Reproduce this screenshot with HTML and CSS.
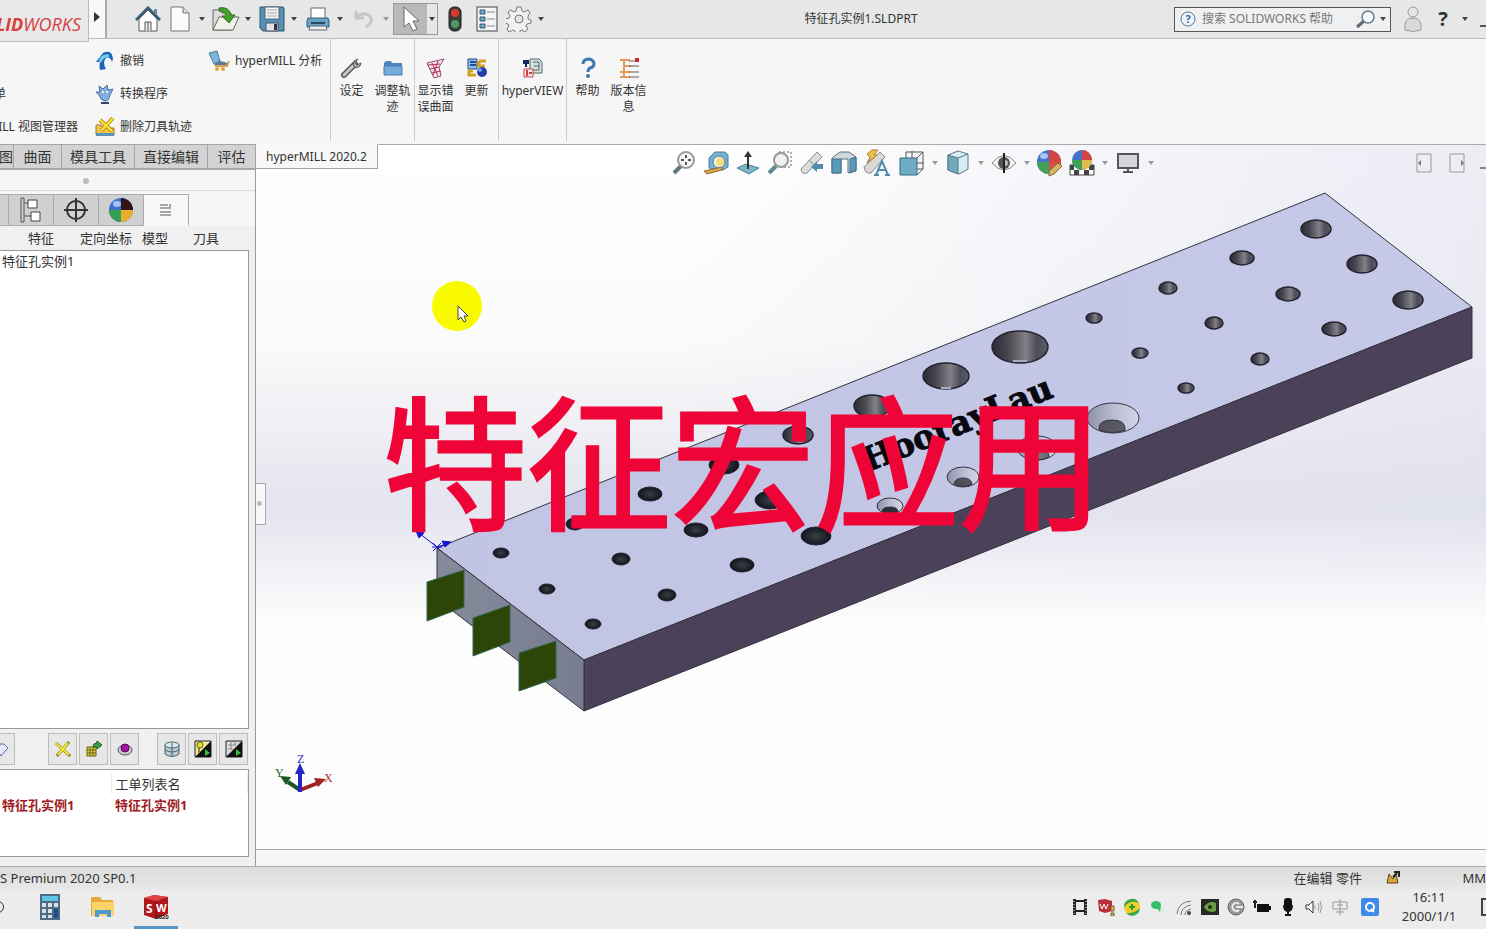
FILE: index.html
```html
<!DOCTYPE html>
<html lang="zh-CN">
<head>
    <meta charset="UTF-8">
    <meta name="viewport" content="width=device-width, initial-scale=1.0">
    <title>特征孔实例1.SLDPRT</title>
    <link rel="stylesheet" href="styles.css">
</head>
<body>

<header class="titlebar">
  <div class="logo"><b>LID</b>WORKS</div>
  <button class="logo-arrow" aria-label="展开菜单"><svg width="8" height="12"><path d="M1 1l6 5-6 5z" fill="#333"/></svg></button>
  <div class="quick">
    <button class="tool" aria-label="主页"><svg width="26" height="26" viewBox="0 0 26 26"><path d="M4 13v12h18V13l-9-9z" fill="#fff" stroke="#555"/><path d="M1 14L13 2l12 12" fill="none" stroke="#3b6076" stroke-width="3"/><path d="M10 25v-9h6v9M13 16v9" fill="#eee" stroke="#555"/><path d="M19 3h3v6l-3-3z" fill="#6c8796"/></svg></button>
    <div class="quick-files">
      <button class="tool" aria-label="新建"><svg width="22" height="26" viewBox="0 0 22 26"><path d="M2 1h12l6 6v18H2z" fill="#fafafa" stroke="#777"/><path d="M14 1v6h6" fill="#ddd" stroke="#777"/></svg></button>
      <button class="caret" aria-label="新建选项"></button>
      <button class="tool" aria-label="打开"><svg width="28" height="26" viewBox="0 0 28 26"><path d="M1 24V4h7l2 3h9v17z" fill="#ddd" stroke="#666"/><path d="M1 24l6-13h20l-6 13z" fill="#f1f1ea" stroke="#666"/><path d="M7 2q10-2 12 7h4l-6 8-7-7h4q-1-5-7-5z" fill="#46a02c" stroke="#2c7420"/></svg></button>
      <button class="caret" aria-label="打开选项"></button>
      <button class="tool" aria-label="保存"><svg width="26" height="26" viewBox="0 0 26 26"><path d="M1 1h23l1 1v23H4l-3-3z" fill="#5590b4" stroke="#2e556e"/><path d="M6 1h14v12H6z" fill="#f4f4f4" stroke="#567"/><path d="M8 4h10M8 7h10M8 10h10" stroke="#aaa"/><path d="M7 17h12v8H7z" fill="#e2e2e2" stroke="#456"/><path d="M15 18h3v6h-3z" fill="#334"/></svg></button>
      <button class="caret" aria-label="保存选项"></button>
      <button class="tool" aria-label="打印"><svg width="24" height="24" viewBox="0 0 24 24"><path d="M5 11V1h14v10" fill="#fff" stroke="#667"/><path d="M2 11h20l1 3v6H1v-6z" fill="#69a2c6" stroke="#2f5f7d"/><path d="M5 15h14v2H5z" fill="#254b63"/><path d="M4 19h16l1 4H3z" fill="#eee" stroke="#667"/></svg></button>
      <button class="caret" aria-label="打印选项"></button>
      <button class="tool" aria-label="撤销"><svg width="22" height="20" viewBox="0 0 22 20"><path d="M3 2v7h8M3 8q9-6 14-1 4 6-4 11" fill="none" stroke="#c4c6c8" stroke-width="3"/></svg></button>
      <button class="caret faint" aria-label="撤销选项"></button>
    </div>
    <div class="select-tool">
      <button class="tool" aria-label="选择"><svg width="18" height="26" viewBox="0 0 18 26"><path d="M2 1v20l5-4 4 8 4-2-4-8h6z" fill="#fff" stroke="#666"/></svg></button>
      <button class="caret" aria-label="选择选项"></button>
    </div>
    <button class="tool" aria-label="重建模型"><svg width="14" height="26" viewBox="0 0 14 26"><rect x="1" y="1" width="12" height="24" rx="5" fill="#3c3c38" stroke="#222"/><circle cx="7" cy="7" r="4" fill="#d8382e"/><circle cx="7" cy="18" r="4" fill="#4f9a63"/></svg></button>
    <button class="tool" aria-label="文件属性"><svg width="22" height="26" viewBox="0 0 22 26"><rect x="1" y="1" width="20" height="24" fill="#f2f4f5" stroke="#444"/><path d="M4 4h5v4H4zM4 11h5v4H4zM4 18h5v4H4z" fill="#6fa9c4" stroke="#35586c"/><path d="M11 6h8M11 13h8M11 20h8" stroke="#888"/></svg></button>
    <button class="tool" aria-label="选项"><svg width="26" height="26" viewBox="0 0 26 26"><path d="M11 1h4l1 4 2 1 4-2 2 3-2 3v3l3 1v3l-4 1-1 2 2 3-3 3-3-2-2 1-1 3h-3l-1-3-2-1-4 2-2-3 2-3-1-2-3-1v-4l4-1 1-2-2-4 3-2 3 2 2-1z" fill="#f1f1f1" stroke="#777"/><circle cx="13" cy="13" r="4" fill="#e4e4e4" stroke="#777"/></svg></button>
    <button class="caret" aria-label="选项菜单"></button>
  </div>
  <h1 class="doc-title">特征孔实例1.SLDPRT</h1>
  <div class="search">
    <svg width="18" height="18" viewBox="0 0 18 18"><circle cx="9" cy="9" r="7" fill="#eef4f9" stroke="#557286"/><text x="9" y="13" font-size="11" font-weight="bold" text-anchor="middle" fill="#2a6fa8">?</text></svg>
    <input type="text" placeholder="搜索 SOLIDWORKS 帮助" aria-label="搜索 SOLIDWORKS 帮助">
    <button class="search-go" aria-label="搜索"><svg width="20" height="20" viewBox="0 0 20 20"><path d="M1 18l7-6" stroke="#667" stroke-width="3"/><circle cx="12" cy="8" r="6" fill="#f4faff" stroke="#66798a" stroke-width="1.500"/></svg></button>
    <button class="caret" aria-label="搜索选项"></button>
  </div>
  <button class="tool" aria-label="登录"><svg width="20" height="28" viewBox="0 0 20 28"><circle cx="10" cy="7" r="5" fill="#e4e4e4" stroke="#999"/><path d="M2 25v-6q1-6 8-6t8 6v6q-8 3-16 0z" fill="#d9d9d9" stroke="#999"/></svg></button>
  <button class="tool help-mark">?</button>
  <button class="caret" aria-label="帮助菜单"></button>
  <button class="minimize" aria-label="最小化"></button>
</header>

<section class="ribbon">
  <div class="ribbon-list first">
    <button>&nbsp;</button>
    <button>单</button>
    <button>ILL 视图管理器</button>
  </div>
  <div class="ribbon-list second">
    <button><svg width="20" height="22" viewBox="0 0 20 22"><path d="M5 20q-1-4 0-8H1L8 3q9-4 10 6l-1 3q-2-6-6-4-4 4 0 11z" fill="#1f62b9"/><path d="M5 12q2-7 9-6" fill="none" stroke="#6fd0ee" stroke-width="3"/></svg>撤销</button>
    <button><svg width="20" height="22" viewBox="0 0 20 22"><path d="M4 3l4 3 4-4 1 5 5-1-3 6q-1 6-5 6t-6-6L1 9h4z" fill="#84aede" stroke="#456f9f"/><path d="M6 20h8" stroke="#2f4668" stroke-width="2"/><circle cx="8" cy="9" r="1" fill="#fff"/><circle cx="12" cy="9" r="1" fill="#fff"/></svg>转换程序</button>
    <button><svg width="20" height="20" viewBox="0 0 20 20"><path d="M1 8h5l2 3h11v7H1z" fill="#f3c34c" stroke="#a27a24"/><path d="M1 16h18v3H1z" fill="#5b91bd"/><path d="M5 3l12 11M18 1L6 14" stroke="#b3921c" stroke-width="4"/><path d="M5 3l12 11M18 1L6 14" stroke="#ffe337" stroke-width="2"/></svg>删除刀具轨迹</button>
  </div>
  <div class="ribbon-list third">
    <button><svg width="22" height="22" viewBox="0 0 22 22"><path d="M1 3l8-2 3 10-6 3z" fill="#7db6db" stroke="#4c7898"/><path d="M6 14l6-3 8 2-2 3-10 1z" fill="#567b9c"/><path d="M7 16h12l2-5" fill="none" stroke="#dba145" stroke-width="2"/><circle cx="9" cy="19" r="2" fill="#e5a33c"/><circle cx="15" cy="19" r="2" fill="#e5a33c"/></svg>hyperMILL 分析</button>
  </div>
  <div class="ribbon-group">
    <button><svg width="22" height="22" viewBox="0 0 22 22"><path d="M3 18L14 7" stroke="#555" stroke-width="6" stroke-linecap="round"/><path d="M3 18L14 7" stroke="#c9c9c9" stroke-width="3" stroke-linecap="round"/><path d="M17 2l-4 2-1 4 3 3 4-2 1-3-4 2-2-2z" fill="#aaa" stroke="#555"/></svg>设定</button>
    <button><svg width="22" height="22" viewBox="0 0 22 22"><path d="M2 6l2-2h5l1 2h10v12H2z" fill="#4a86bf"/><path d="M2 9h18v9H2z" fill="#76aadb" stroke="#477cab"/></svg>调整轨迹</button>
  </div>
  <div class="ribbon-group">
    <button><svg width="22" height="22" viewBox="0 0 22 22"><path d="M2 6l17-4-5 8 2 9-7 2z" fill="#f3e6ee" stroke="#8b4b7b"/><path d="M3 8l12-1M5 12l9-2M7 16l9-2M7 6l6 13M13 4l-5 14" stroke="#bd2e4d"/></svg>显示错误曲面</button>
    <button><svg width="22" height="22" viewBox="0 0 22 22"><path d="M2 2h9v10H2z" fill="#8ec4e8" stroke="#1e4196"/><path d="M4 5h6M4 8h6" stroke="#244a9e" stroke-width="2"/><path d="M13 4h7M13 4v5h6M10 18H3v-4h4" stroke="#d1a41c" stroke-width="3" fill="none"/><circle cx="16" cy="15" r="5" fill="#233cae"/><circle cx="14" cy="13" r="2" fill="#7f9ae7"/></svg>更新</button>
  </div>
  <div class="ribbon-group wide">
    <button><svg width="22" height="22" viewBox="0 0 22 22"><path d="M8 2h9l3 3v11H8z" fill="#d7e0df" stroke="#4d6965"/><path d="M11 5h6v8h-6M12 9h5" fill="none" stroke="#4d6965"/><path d="M1 3h6v4H1z" fill="#17285c"/><path d="M4 6v4" stroke="#17285c" stroke-width="2"/><path d="M2 12h9v8H2z" fill="#fce9e9" stroke="#cf4242"/><path d="M5 13v6M7 16h3" stroke="#cf4242" stroke-width="2"/></svg>hyperVIEW</button>
  </div>
  <div class="ribbon-group last">
    <button><svg width="22" height="22" viewBox="0 0 22 22"><path d="M6 7q0-5 6-5 5 1 5 5 0 3-4 4-2 1-2 4" fill="none" stroke="#3f78b5" stroke-width="3"/><circle cx="11" cy="19" r="2" fill="#3f78b5"/></svg>帮助</button>
    <button><svg width="22" height="22" viewBox="0 0 22 22"><path d="M2 3h10M6 9h7M2 15h10M2 20h10M6 3v17" stroke="#e79b58" stroke-width="2"/><path d="M11 4h6M11 9h10M11 15h10M11 20h10" stroke="#665a58"/><path d="M17 1h4v4h-4z" fill="#cf2525"/></svg>版本信息</button>
  </div>
</section>

<main class="workspace">
  <nav class="ribbon-tabs">
    <button class="cut">图</button>
    <button>曲面</button>
    <button>模具工具</button>
    <button>直接编辑</button>
    <button>评估</button>
    <button class="active">hyperMILL 2020.2</button>
  </nav>

  <aside class="panel">
    <div class="panel-grip"><i></i></div>
    <div class="panel-tabs">
      <button class="stub" aria-label="特征树"></button>
      <button aria-label="配置"><svg width="24" height="26" viewBox="0 0 24 26"><path d="M2 1v24M5 1v24M2 1h3M2 25h3M5 6h5M5 19h7" fill="none" stroke="#555"/><path d="M9 3h9v8H9zM12 15h9v9h-9z" fill="#fff" stroke="#444"/></svg></button>
      <button aria-label="坐标"><svg width="26" height="26" viewBox="0 0 26 26"><circle cx="13" cy="13" r="9" fill="none" stroke="#333" stroke-width="2"/><path d="M13 1v24M1 13h24" stroke="#333" stroke-width="2"/></svg></button>
      <button aria-label="外观"><svg width="26" height="26" viewBox="0 0 26 26"><circle cx="13" cy="13" r="12" fill="#3a6fd4"/><path d="M13 13V1a12 12 0 0 1 12 12z" fill="#321318"/><path d="M13 13h12a12 12 0 0 1-12 12z" fill="#e6b02e"/><path d="M13 13v12A12 12 0 0 1 1 13z" fill="#35a052"/><ellipse cx="9" cy="7" rx="4" ry="3" fill="#a4c3f4"/></svg></button>
      <button class="active" aria-label="hyperMILL"><svg width="14" height="14" viewBox="0 0 14 14"><path d="M1 2h8M1 5h11M1 9h11M1 12h11M11 1v3" stroke="#555"/></svg></button>
    </div>
    <div class="panel-columns">
      <span>特征</span><span>定向坐标</span><span>模型</span><span>刀具</span>
    </div>
    <div class="tree">特征孔实例1</div>
    <div class="job-tools">
      <button class="stub" aria-label="工单"><svg width="16" height="20" viewBox="0 0 16 20"><path d="M0 5h4l4 4-7 8-3-5z" fill="#e5e7fb" stroke="#666b9b"/></svg></button>
      <button aria-label="删除"><svg width="18" height="18" viewBox="0 0 18 18"><path d="M2 3l14 13M15 2L3 16" stroke="#77731c" stroke-width="3"/><path d="M2 3l13 12M14 3L4 15" stroke="#f1e728" stroke-width="2"/></svg></button>
      <button aria-label="添加"><svg width="18" height="18" viewBox="0 0 18 18"><path d="M2 7h9v9H2z" fill="#e4d33d" stroke="#6a611a"/><path d="M5 7v9M8 7v9M2 10h9M2 13h9" stroke="#6a611a"/><path d="M8 7q0-4 4-4V1l5 4-5 4V7z" fill="#3b9d42" stroke="#1f602a"/></svg></button>
      <button aria-label="特征"><svg width="18" height="18" viewBox="0 0 18 18"><ellipse cx="9" cy="10" rx="7" ry="5" fill="#ccc" stroke="#555"/><ellipse cx="9" cy="8" rx="4" ry="4" fill="#a313a8" stroke="#4f0f55"/></svg></button>
      <button class="apart" aria-label="毛坯"><svg width="18" height="18" viewBox="0 0 18 18"><path d="M2 5v9q7 5 14 0V5" fill="#b9cbd2" stroke="#4b6069"/><ellipse cx="9" cy="5" rx="7" ry="3" fill="#dce9ed" stroke="#4b6069"/><path d="M9 3v13M2 10q7 4 14 0" fill="none" stroke="#4b6069"/></svg></button>
      <button aria-label="计算"><svg width="18" height="18" viewBox="0 0 18 18"><path d="M1 1h16v16H1z" fill="#f0eda2" stroke="#222"/><path d="M17 1v16H1z" fill="#111"/><circle cx="6" cy="5" r="3" fill="#e6df31" stroke="#665f15"/><path d="M5 8v5" stroke="#948a1a" stroke-width="2"/><path d="M11 9l5 4-5 3z" fill="#2fc23c"/></svg></button>
      <button aria-label="模拟"><svg width="18" height="18" viewBox="0 0 18 18"><path d="M1 1h16v16H1z" fill="#ddd" stroke="#222"/><path d="M17 1v16H1z" fill="#111"/><path d="M3 5h8M3 9h5M6 2v8M10 2v4" stroke="#888"/><path d="M11 9l5 4-5 3z" fill="#2fc23c"/></svg></button>
    </div>
    <div class="jobs">
      <table>
        <thead><tr><th>&nbsp;</th><th>工单列表名</th></tr></thead>
        <tbody><tr><td>特征孔实例1</td><td>特征孔实例1</td></tr></tbody>
      </table>
    </div>
  </aside>

  <section class="viewport">
    <svg class="scene" viewBox="256 144 1230 706" preserveAspectRatio="xMinYMin meet">
      <defs>
        <linearGradient id="top" x1="0" y1="0" x2="1" y2="0"><stop offset="0" stop-color="#c1c5e3"/><stop offset="1" stop-color="#c5c8e6"/></linearGradient>
        <linearGradient id="end" x1="0" y1="0" x2="1" y2="0"><stop offset="0" stop-color="#858b9b"/><stop offset="1" stop-color="#777d8e"/></linearGradient>
        <linearGradient id="hole" x1="0" y1="0" x2="1" y2="0"><stop offset="0" stop-color="#2a2a35"/><stop offset=".3" stop-color="#4a4852"/><stop offset=".6" stop-color="#838087"/><stop offset=".8" stop-color="#4d4d59"/><stop offset="1" stop-color="#5a5a68"/></linearGradient>
        <linearGradient id="sink" x1="0" y1="0" x2="1" y2="0"><stop offset="0" stop-color="#8d8fa7"/><stop offset=".5" stop-color="#b9bbd0"/><stop offset="1" stop-color="#d5d7e8"/></linearGradient>
        <radialGradient id="dark"><stop offset="0" stop-color="#3b4047"/><stop offset="1" stop-color="#11141c"/></radialGradient>
      </defs>

      <!-- plate -->
      <g stroke="#33333f" stroke-linejoin="round">
        <path d="M437 548L1325 193 1472 307 584 660z" fill="url(#top)"/>
        <path d="M584 660L1472 307V358L584 711z" fill="#4b4158"/>
        <path d="M437 548L584 660V711L437 599z" fill="url(#end)"/>
      </g>

      <!-- blind holes -->
      <g fill="url(#dark)" stroke="#20242d">
        <ellipse cx="501" cy="553" rx="8" ry="5"/><ellipse cx="547" cy="589" rx="8" ry="5"/><ellipse cx="593" cy="624" rx="8" ry="5"/>
        <ellipse cx="575" cy="524" rx="9" ry="6"/><ellipse cx="621" cy="559" rx="9" ry="6"/><ellipse cx="667" cy="595" rx="9" ry="6"/>
        <ellipse cx="650" cy="494" rx="12" ry="7"/><ellipse cx="696" cy="530" rx="12" ry="7"/><ellipse cx="742" cy="565" rx="12" ry="7"/>
        <ellipse cx="724" cy="465" rx="15" ry="9"/><ellipse cx="770" cy="500" rx="15" ry="9"/><ellipse cx="816" cy="536" rx="15" ry="9"/>
      </g>

      <!-- through holes -->
      <g fill="url(#hole)" stroke="#23232f" stroke-width="1.500">
        <ellipse cx="798" cy="435" rx="15" ry="9"/><ellipse cx="872" cy="406" rx="18" ry="11"/><ellipse cx="946" cy="376" rx="23" ry="13"/><ellipse cx="1020" cy="347" rx="28" ry="16"/>
        <ellipse cx="1094" cy="318" rx="8" ry="5"/><ellipse cx="1140" cy="353" rx="8" ry="5"/><ellipse cx="1186" cy="388" rx="8" ry="5"/>
        <ellipse cx="1168" cy="288" rx="9" ry="6"/><ellipse cx="1214" cy="323" rx="9" ry="6"/><ellipse cx="1260" cy="359" rx="9" ry="6"/>
        <ellipse cx="1242" cy="258" rx="12" ry="7"/><ellipse cx="1288" cy="294" rx="12" ry="7"/><ellipse cx="1334" cy="329" rx="12" ry="7"/>
        <ellipse cx="1316" cy="229" rx="15" ry="9"/><ellipse cx="1362" cy="264" rx="15" ry="9"/><ellipse cx="1408" cy="300" rx="15" ry="9"/>
      </g>
      <path d="M1013 361h14M941 388h10" stroke="#a9abc2" stroke-width="2"/>

      <!-- countersinks -->
      <g stroke="#33333f">
        <g fill="url(#sink)"><ellipse cx="890" cy="506" rx="13" ry="8"/><ellipse cx="963" cy="477" rx="16" ry="10"/><ellipse cx="1037" cy="448" rx="20" ry="12"/><ellipse cx="1113" cy="418" rx="26" ry="15"/></g>
        <g fill="url(#hole)"><path d="M882 512q0-5 8-5t8 5q-8 4-16 0zM954 484q1-6 9-6t9 6q-9 5-18 0zM1026 457q1-8 12-8t11 8q-12 6-23 0zM1099 430q-1-10 13-10t13 10q-12 5-26 0z"/></g>
      </g>

      <text class="engraving" transform="translate(868 472) rotate(-22)">HoorayLau</text>

      <!-- reference planes -->
      <g fill="#2d4608" stroke="#2c6a52">
        <path d="M427 582L464 570V607L427 621z"/><path d="M473 618L510 605V642L473 656z"/><path d="M519 653L556 641V678L519 691z"/>
      </g>

      <!-- part origin -->
      <g stroke="#1515d2" fill="#1515d2"><path d="M437 547L420 534M437 547L446 544M433 543l8 8M441 543l-8 8M432 547h10"/><path d="M416 531l8 2-5 5zM451 542l-9-1 3 6z"/></g>

      <!-- view triad -->
      <g stroke-width="4">
        <path d="M300 790L288 782" stroke="#1e5426"/><path d="M280 776l11 1-5 8z" fill="#1e5426"/>
        <path d="M300 790L318 783" stroke="#9c2323"/><path d="M326 779l-12-1 4 9z" fill="#9c2323"/>
        <path d="M300 792V773" stroke="#2424c8"/><path d="M300 763l-5 11h10z" fill="#2424c8"/>
      </g>
      <g class="axis"><text x="297" y="763" fill="#3434a4">Z</text><text x="275" y="777" fill="#2e6638">Y</text><text x="324" y="782" fill="#a43434">X</text></g>

      <!-- pointer -->
      <circle cx="457" cy="306" r="25" fill="#f9f900"/>
      <path d="M458 306v14l3-3 3 5 2-1-2-5h4z" fill="#fff" stroke="#444"/>
    </svg>

    <div class="view-bar">
      <div class="view-tools">
        <button class="tool" aria-label="整屏显示全图"><svg width="24" height="26" viewBox="0 0 24 26"><path d="M2 23l7-7" stroke="#5d7a7e" stroke-width="4"/><circle cx="14" cy="10" r="8" fill="#f6f6f6" stroke="#999" stroke-width="2"/><path d="M14 5v3M14 12v3M9 10h3M16 10h3" stroke="#555" stroke-width="2"/></svg></button>
        <button class="tool" aria-label="测量"><svg width="26" height="26" viewBox="0 0 26 26"><path d="M6 18V8l6-6h10l3 3v12l-5 3z" fill="#75b3cd" stroke="#467c92"/><circle cx="16" cy="12" r="6" fill="#eee" stroke="#467c92"/><circle cx="17" cy="12" r="4" fill="#f4dd78"/><path d="M1 21l18-4v3L4 24z" fill="#d9a354" stroke="#997038"/></svg></button>
        <button class="tool" aria-label="正视于"><svg width="24" height="26" viewBox="0 0 24 26"><path d="M1 18l9-4 13 4-10 6z" fill="#79b6c9" stroke="#4b8496"/><path d="M12 19V4" stroke="#333" stroke-width="2"/><path d="M8 7l4-6 4 6z" fill="#333"/></svg></button>
        <button class="tool" aria-label="局部放大"><svg width="26" height="26" viewBox="0 0 26 26"><path d="M12 2h12v15H12z" fill="none" stroke="#666" stroke-dasharray="2 2"/><path d="M2 23l7-7" stroke="#5d8a8e" stroke-width="4"/><circle cx="14" cy="10" r="7" fill="#f1f1f1" stroke="#999" stroke-width="2"/></svg></button>
        <button class="tool" aria-label="上一视图"><svg width="26" height="26" viewBox="0 0 26 26"><path d="M2 19L18 2l5 5L8 23q-5 2-6-4z" fill="#dcdcdc" stroke="#888"/><path d="M10 10l6 6" stroke="#888"/><path d="M24 14h-6v-3l-6 6 6 5v-3h6z" fill="#518eac"/></svg></button>
        <button class="tool" aria-label="剖面视图"><svg width="26" height="26" viewBox="0 0 26 26"><path d="M1 8l8-6h9l7 5v14l-8 2V9h-7v14H1z" fill="#cfd9dd" stroke="#5f7079"/><path d="M1 9h9v14H1zM19 9l6-2v13l-6 3z" fill="#5a9aba" stroke="#3e728b"/></svg></button>
        <button class="tool" aria-label="动态注解"><svg width="28" height="28" viewBox="0 0 28 28"><path d="M2 18L18 3l5 5L9 24q-6 1-7-6z" fill="#d8d8d8" stroke="#888"/><path d="M5 5l5-4h6l-4 5h3L5 14l3-6z" fill="#efc24c" stroke="#a67c24"/><path d="M14 26l6-14 6 14M16 21h8M12 26h5M23 26h5" fill="none" stroke="#508ba8" stroke-width="2"/></svg></button>
        <button class="tool push" aria-label="视图定向"><svg width="26" height="26" viewBox="0 0 26 26"><path d="M7 2h17v17H7z" fill="#f4f6f6" stroke="#555"/><path d="M1 25l6-6M18 8l6-6M18 25l6-6M13 1v9M16 13h9" stroke="#555"/><path d="M1 8h17v17H1z" fill="#6eabc4" stroke="#38687c"/></svg></button>
        <button class="caret faint" aria-label="视图定向选项"></button>
        <button class="tool" aria-label="显示样式"><svg width="24" height="26" viewBox="0 0 24 26"><path d="M2 5l10-4 10 3v15l-9 5-11-4z" fill="#d7ecf2" stroke="#547987"/><path d="M2 5l10 3v16L2 20z" fill="#71aabd" stroke="#547987"/><path d="M12 8l10-4" stroke="#547987"/></svg></button>
        <button class="caret faint" aria-label="显示样式选项"></button>
        <button class="tool" aria-label="隐藏/显示"><svg width="26" height="20" viewBox="0 0 26 20"><path d="M1 10q12-15 24 0-12 14-24 0z" fill="#f5f5f5" stroke="#888"/><circle cx="13" cy="10" r="6" fill="#555"/><path d="M13 0v20" stroke="#222" stroke-width="2"/><path d="M14 7a3 3 0 0 1 0 6" fill="#bbb"/></svg></button>
        <button class="caret faint" aria-label="隐藏选项"></button>
        <button class="tool" aria-label="编辑外观"><svg width="28" height="28" viewBox="0 0 28 28"><circle cx="13" cy="13" r="12" fill="#4073c9"/><path d="M13 13V1a12 12 0 0 1 12 12z" fill="#d74343"/><path d="M13 13v12A12 12 0 0 1 1 13z" fill="#42a05a"/><path d="M13 13h12a12 12 0 0 1-12 12z" fill="#d64f46"/><ellipse cx="8" cy="7" rx="4" ry="3" fill="#a8c6ef"/><path d="M13 22l9-8 4 3-8 8-5 2z" fill="#d7b666" stroke="#7a6534"/></svg></button>
        <button class="tool" aria-label="应用布景"><svg width="28" height="28" viewBox="0 0 28 28"><path d="M2 16h24v10H2z" fill="#fff" stroke="#444"/><path d="M2 16h4v5H2zM6 21h5v5H6zM11 17h5v4h-5zM16 21h5v5h-5zM21 16h5v5h-5z" fill="#444"/><circle cx="14" cy="11" r="10" fill="#4073c9"/><path d="M14 11V1a10 10 0 0 1 10 10z" fill="#d74343"/><path d="M14 11v10A10 10 0 0 1 4 11z" fill="#42a05a"/><path d="M14 11h10a10 10 0 0 1-10 10z" fill="#e2bd4c"/></svg></button>
        <button class="caret faint" aria-label="布景选项"></button>
        <button class="tool" aria-label="视图设定"><svg width="24" height="22" viewBox="0 0 24 22"><path d="M2 2h20v14H2z" fill="#d5d7dc" stroke="#555" stroke-width="2"/><path d="M12 16v4M7 20h10" stroke="#555" stroke-width="2"/></svg></button>
        <button class="caret faint" aria-label="视图设定选项"></button>
      </div>
      <div class="window-tools">
        <button class="tool" aria-label="左侧面板"><svg width="16" height="20" viewBox="0 0 16 20"><path d="M1 1h14v18H1z" fill="none" stroke="#999"/><path d="M5 7v6l-3-3z" fill="#777"/></svg></button>
        <button class="tool" aria-label="右侧面板"><svg width="16" height="20" viewBox="0 0 16 20"><path d="M1 1h14v18H1z" fill="none" stroke="#999"/><path d="M12 7v6l3-3z" fill="#777"/></svg></button>
        <button class="minimize" aria-label="最小化文档"></button>
      </div>
    </div>
    <button class="panel-handle" aria-label="收起面板"></button>
  </section>
  <p class="caption">特征宏应用</p>
</main>

<footer class="statusbar">
  <span class="product">S Premium 2020 SP0.1</span>
  <span>在编辑 零件</span>
  <svg class="rebuild" width="14" height="14" viewBox="0 0 14 14"><path d="M1 12l2-9 4 5 3-5 2 9z" fill="#d9a438" stroke="#5c4618"/><path d="M7 6l4-4M8 1h5v5" fill="none" stroke="#222" stroke-width="2"/></svg>
  <span class="units">MM</span>
</footer>

<div class="taskbar">
  <button class="cortana" aria-label="搜索"></button>
  <button class="app" aria-label="计算器"><svg width="20" height="26" viewBox="0 0 20 26"><path d="M0 0h20v26H0z" fill="#4d6b82"/><path d="M2 2h16v5H2z" fill="#5ec3e7"/><path d="M2 9h4v4H2zM8 9h4v4H8zM14 9h4v4h-4zM2 15h4v4H2zM8 15h4v4H8zM2 21h4v3H2zM8 21h4v3H8z" fill="#d8e1e8"/><path d="M14 15h4v9h-4z" fill="#1b4d87"/></svg></button>
  <button class="app" aria-label="文件资源管理器"><svg width="24" height="22" viewBox="0 0 24 22"><path d="M0 1h9l2 3h11v16H0z" fill="#e9a83c"/><path d="M1 6h22v14H1z" fill="#f9d368"/><path d="M4 21v-7h16v7h-4v-3H8v3z" fill="#4b9ad0"/></svg></button>
  <button class="app running" aria-label="SOLIDWORKS"><svg width="26" height="26" viewBox="0 0 26 26"><path d="M1 4l10-3 14 2v17l-12 5-12-4z" fill="#b2171c"/><path d="M1 4l12 3 12-4-14-2z" fill="#e44347"/><path d="M13 7v18" stroke="#7c0e12"/><g fill="#fff" font-weight="bold"><text x="3" y="19" font-size="12">S</text><text x="13" y="18" font-size="11">W</text></g><text x="12" y="25" font-size="6" font-weight="bold" fill="#222">2020</text></svg></button>
  <div class="tray">
    <svg viewBox="0 0 18 18"><path d="M2 1h3v16H2zM13 1h3v16h-3z" fill="#222"/><path d="M5 3h8M5 13h8" stroke="#222" stroke-width="2"/><path d="M3 3v13M15 3v13" stroke="#fff" stroke-dasharray="1 2"/></svg>
    <svg viewBox="0 0 18 18"><path d="M1 2l7-1 7 2v10l-7 2-6-2z" fill="#b9303a"/><path d="M3 6l2 5 2-5 2 5 2-5" fill="none" stroke="#fff"/><path d="M14 8h3v5h-3zM14 15h3v3h-3z" fill="#e2b84a" stroke="#775f22"/></svg>
    <svg viewBox="0 0 18 18"><circle cx="9" cy="9" r="8" fill="#f0cf2b"/><path d="M1 9a8 8 0 0 1 15-4q-8-4-15 4z" fill="#36a846"/><path d="M17 10a8 8 0 0 1-14 5q8 1 14-5z" fill="#36a846"/><path d="M9 6v6M6 9h6" stroke="#2c9a3c" stroke-width="2"/></svg>
    <svg viewBox="0 0 18 18"><ellipse cx="7" cy="7" rx="5" ry="4" fill="#35bd69"/><path d="M7 9l4 5 1-6z" fill="#35bd69"/><circle cx="14" cy="12" r="2" fill="#d5eedf"/></svg>
    <svg viewBox="0 0 18 18"><path d="M2 16Q3 4 16 3M6 17q0-8 10-10M10 17q0-5 6-6" fill="none" stroke="#777"/><circle cx="14" cy="15" r="2" fill="#444"/></svg>
    <svg viewBox="0 0 18 18"><path d="M0 1h18v16H0z" fill="#252a22"/><path d="M3 9q5-7 12-4v8q-8 3-12-4z" fill="#6c9d3d"/><circle cx="9" cy="9" r="2" fill="#252a22"/></svg>
    <svg viewBox="0 0 18 18"><circle cx="9" cy="9" r="8" fill="#999" stroke="#666"/><path d="M12 6a4 4 0 1 0 0 6M9 9h7" fill="none" stroke="#eee" stroke-width="2"/></svg>
    <svg viewBox="0 0 18 18"><path d="M4 6h12v8H4z" fill="#111"/><path d="M16 8h2v4h-2z" fill="#111"/><path d="M2 2v8M0 4h4" stroke="#222" stroke-width="2"/></svg>
    <svg viewBox="0 0 18 18"><rect x="5" y="0" width="8" height="12" rx="3" fill="#111"/><path d="M4 7q0 7 5 7t5-7" fill="#111"/><path d="M9 13v4M6 17h6" stroke="#111" stroke-width="2"/></svg>
    <svg viewBox="0 0 18 18"><path d="M1 7h3l4-4v12l-4-4H1z" fill="#fff" stroke="#333"/><path d="M10 7v4M13 5q2 4 0 8M15 3q3 6 0 12" fill="none" stroke="#999"/></svg>
    <svg viewBox="0 0 18 18"><path d="M9 1v16M2 4h14v7H2zM6 7h6M5 14h8" fill="none" stroke="#999"/></svg>
    <svg class="q" viewBox="0 0 18 18"><rect width="18" height="18" rx="2" fill="#3f8ae8"/><circle cx="9" cy="9" r="4" fill="none" stroke="#fff" stroke-width="2"/><path d="M10 11l3 3" stroke="#fff" stroke-width="2"/></svg>
  </div>
  <div class="clock"><span>16:11</span><span>2000/1/1</span></div>
  <button class="notice" aria-label="通知"></button>
</div>

</body>
</html>
```

FILE: styles.css
```css
* { box-sizing: border-box; }

body {
  margin: 0;
  height: 100vh;
  display: flex;
  flex-direction: column;
  overflow: hidden;
  font: 12px/16px "Noto Sans", "Noto Sans CJK SC", sans-serif;
  color: #333;
  background: #f6f6f6;
}

button {
  border: 0;
  padding: 0;
  background: none;
  font: inherit;
  color: inherit;
}

svg { flex: none; }

.tool {
  width: 30px;
  height: 30px;
  flex: none;
  display: flex;
  align-items: center;
  justify-content: center;
}

.caret {
  width: 14px;
  height: 30px;
  flex: none;
  display: flex;
  align-items: center;
  justify-content: center;
}

.caret::before {
  content: "";
  border: 3px solid transparent;
  border-top: 4px solid #444;
  border-bottom: 0;
}

.caret.faint::before { border-top-color: #999; }

/* title bar */
.titlebar {
  height: 39px;
  flex: none;
  display: flex;
  align-items: center;
  background: #e6e7e7;
  border-bottom: 1px solid #bbb;
}

.logo {
  width: 89px;
  height: 42px;
  flex: none;
  align-self: flex-start;
  display: flex;
  align-items: center;
  justify-content: flex-end;
  padding: 6px 7px 0 0;
  overflow: hidden;
  background: #e9e9e9;
  border-right: 1px solid #bbb;
  border-bottom: 1px solid #bbb;
  color: #d8403f;
  font: italic 18px/24px "Open Sans", sans-serif;
  z-index: 1;
}

.logo-arrow {
  width: 18px;
  height: 38px;
  background: #f8f8f8;
  border-right: 2px solid #aaa;
}

.quick {
  display: flex;
  align-items: center;
  gap: 2px;
  margin-left: 26px;
}

.quick-files {
  display: flex;
}

.quick-files .caret { margin-right: 2px; }
.quick-files .caret:last-child { margin-right: 0; }

.select-tool {
  display: flex;
  width: 45px;
  margin-left: -2px;
  border: 1px solid #999;
}

.select-tool .tool {
  width: 33px;
  background: #b9b9b9;
}

.select-tool .caret { width: 10px; }
.quick > .caret { margin-left: -2px; }

.doc-title {
  flex: 1;
  margin: 0;
  text-align: center;
  font-size: 12px;
  font-weight: normal;
}

.search {
  width: 217px;
  height: 25px;
  display: flex;
  align-items: center;
  padding-left: 4px;
  border: 1px solid #555;
  background: #eef0f2;
  margin-right: 7px;
}

.search input {
  flex: 1;
  min-width: 0;
  margin-left: 5px;
  padding: 0;
  border: 0;
  background: none;
  font: inherit;
}

.search input::placeholder { color: #777; }

.search-go { height: 20px; }

.help-mark {
  font-size: 20px;
  font-weight: bold;
}

.minimize {
  width: 14px;
  height: 30px;
  margin-right: -8px;
  margin-left: 8px;
  flex: none;
}

.minimize::before {
  content: "";
  display: block;
  height: 2px;
  margin-top: 14px;
  background: #555;
}

/* ribbon */
.ribbon {
  height: 105px;
  flex: none;
  display: flex;
  background: #f6f6f6;
}

.ribbon-list {
  display: flex;
  flex-direction: column;
  padding-top: 5px;
}

.ribbon-list button {
  height: 33px;
  display: flex;
  align-items: center;
  gap: 5px;
  white-space: nowrap;
}

.ribbon-list.first {
  width: 78px;
  align-items: flex-end;
}

.ribbon-list.first button:nth-child(2) { align-self: flex-start; margin-left: -6px; }
.ribbon-list.second { margin-left: 17px; width: 113px; }
.ribbon-list.third { width: 122px; }

.ribbon-group {
  display: flex;
  align-items: flex-start;
  padding: 18px 1px 0 0;
  height: 102px;
  border-left: 1px solid #ccc;
}

.ribbon-group button {
  width: 41px;
  display: flex;
  flex-direction: column;
  align-items: center;
  gap: 4px;
  padding: 0 2px;
}

.ribbon-group.wide { padding: 18px 0 0; }
.ribbon-group.wide button { width: 67px; padding: 0; }

/* workspace */
.workspace {
  flex: 1;
  min-height: 0;
  display: flex;
  position: relative;
}

.ribbon-tabs {
  position: absolute;
  left: 0;
  top: 0;
  z-index: 2;
  height: 26px;
  display: flex;
}

.ribbon-tabs button {
  height: 25px;
  font-size: 14px;
  background: #d3d3d3;
  border: solid #a5a5a5;
  border-width: 1px 1px 1px 0;
  padding: 0 8px;
  white-space: nowrap;
}

.ribbon-tabs button:nth-child(2),
.ribbon-tabs button:nth-child(5) { width: 48px; }

.ribbon-tabs .cut {
  width: 14px;
  padding: 0;
  direction: rtl;
  overflow: hidden;
}

.ribbon-tabs .active {
  width: 122px;
  font-size: 12px;
  background: #f8f8f8;
  border-top-color: #f8f8f8;
}

.panel {
  width: 256px;
  flex: none;
  display: flex;
  flex-direction: column;
  padding: 25px 6px 9px 0;
  background: #f0f0f0;
  border-right: 1px solid #999;
}

.panel-grip {
  height: 22px;
  margin-right: -6px;
  background: #f6f6f6;
  border-top: 1px solid #aaa;
  border-bottom: 1px solid #ddd;
}

.panel-grip i {
  display: block;
  width: 6px;
  height: 6px;
  margin: 8px 0 0 83px;
  border-radius: 50%;
  background: #bbb;
}

.panel-tabs {
  display: flex;
  height: 35px;
  padding-top: 3px;
  margin-right: -6px;
  background: #f6f6f6;
}

.panel-tabs button {
  width: 45px;
  background: #d0d0d0;
  border: solid #aaa;
  border-width: 1px 1px 1px 0;
  display: flex;
  align-items: center;
  justify-content: center;
}

.panel-tabs .stub { width: 9px; }
.panel-tabs .active { background: #f8f8f8; border-bottom-color: #f8f8f8; }

.panel-columns {
  height: 24px;
  display: grid;
  grid-template-columns: 52px 62px 51px 1fr;
  align-items: center;
  padding-left: 28px;
  font-size: 13px;
}

.tree {
  flex: 1;
  padding: 2px;
  background: #fff;
  border: solid #999;
  border-width: 1px 1px 1px 0;
  font-size: 13px;
}

.job-tools {
  height: 40px;
  display: flex;
  align-items: center;
  gap: 2px;
}

.job-tools button {
  width: 29px;
  height: 32px;
  background: #e7e7e7;
  border: 1px solid #bcbcbc;
  display: flex;
  align-items: center;
  justify-content: center;
}

.job-tools .stub {
  width: 15px;
  margin-right: 31px;
  border-left: 0;
  justify-content: flex-start;
}

.job-tools .apart { margin-left: 16px; }

.jobs {
  height: 88px;
  background: #fff;
  border: solid #999;
  border-width: 1px 1px 1px 0;
  padding-top: 3px;
}

.jobs table {
  width: 100%;
  border-collapse: collapse;
  table-layout: fixed;
  font-size: 13px;
  text-align: left;
}

.jobs th, .jobs td {
  height: 21px;
  padding: 0 4px;
  font-weight: normal;
}

.jobs th:first-child, .jobs td:first-child { width: 111px; padding-left: 2px; }
.jobs th { border-right: 1px solid #eee; }
.jobs td { color: #a01c24; font-weight: bold; }

.viewport {
  flex: 1;
  min-width: 0;
  position: relative;
  margin-bottom: 16px;
  border-top: 1px solid #aaa;
  border-bottom: 1px solid #aaa;
  background:
    linear-gradient(transparent 52%, #fdfdfd 68%),
    linear-gradient(to right, transparent 35%, rgba(222, 224, 238, .6)),
    linear-gradient(#fff, #fafafa 28%, #e5e5ef 50%, #dfe0ef);
}

.scene {
  position: absolute;
  left: 0;
  top: -1px;
  width: 100%;
}

.engraving {
  font: bold 33px "DejaVu Serif", serif;
  fill: #080810;
  stroke: #080810;
}

.axis {
  font: 12px "Liberation Serif", serif;
}

.view-bar {
  position: relative;
  display: flex;
  justify-content: space-between;
  padding-top: 3px;
}

.view-tools {
  display: flex;
  margin-left: 33.5%;
}

.view-tools .tool { width: 32px; }
.view-tools .push { margin-left: 4px; }

.window-tools {
  display: flex;
  gap: 3px;
}

.window-tools .minimize { margin-left: 5px; }
.window-tools .minimize::before { margin-top: 10px; background: #888; }

.panel-handle {
  position: absolute;
  left: 0;
  top: 48%;
  width: 10px;
  height: 42px;
  background: #f8f8f8;
  border: 1px solid #aaa;
  border-left: 0;
}

.panel-handle::before {
  content: "";
  display: block;
  width: 5px;
  height: 5px;
  margin-left: 1px;
  border-radius: 50%;
  background: #bbb;
}

.caption {
  position: absolute;
  left: 0;
  right: 0;
  top: 240px;
  margin: 0;
  text-align: center;
  font: 144px/144px "Noto Sans CJK SC", sans-serif;
  color: #ee0436;
  -webkit-text-stroke: 3px #ee0436;
  z-index: 3;
  pointer-events: none;
}

/* status bar */
.statusbar {
  height: 24px;
  flex: none;
  display: flex;
  align-items: center;
  padding-bottom: 2px;
  background: linear-gradient(#dcdcdc, #e8e8e8);
  border-top: 1px solid #aaa;
  font-size: 13px;
}

.product { flex: 1; }
.rebuild { margin: 0 24px; }
.units { width: 62px; text-align: right; }

.taskbar {
  height: 39px;
  flex: none;
  display: flex;
  align-items: center;
  background: #ececec;
}

.cortana {
  width: 12px;
  height: 12px;
  margin-left: -8px;
  margin-bottom: 6px;
  border: 1px solid #333;
  border-radius: 50%;
}

.app {
  width: 44px;
  height: 39px;
  margin-left: 9px;
  padding-bottom: 3px;
  display: flex;
  align-items: center;
  justify-content: center;
  border-bottom: 3px solid transparent;
}

.cortana + .app { margin-left: 24px; }
.app.running { border-bottom-color: #5595c7; }

.tray {
  display: flex;
  gap: 8px;
  margin-left: auto;
  margin-bottom: 6px;
}

.tray svg { width: 18px; height: 18px; }
.tray .q { margin-left: 4px; }

.clock {
  width: 72px;
  margin: 0 16px 6px 14px;
  display: flex;
  flex-direction: column;
  text-align: center;
  font-size: 13px;
  line-height: 19px;
}

.notice {
  width: 12px;
  height: 18px;
  margin-right: -7px;
  margin-bottom: 6px;
  border: 2px solid #444;
}
```
